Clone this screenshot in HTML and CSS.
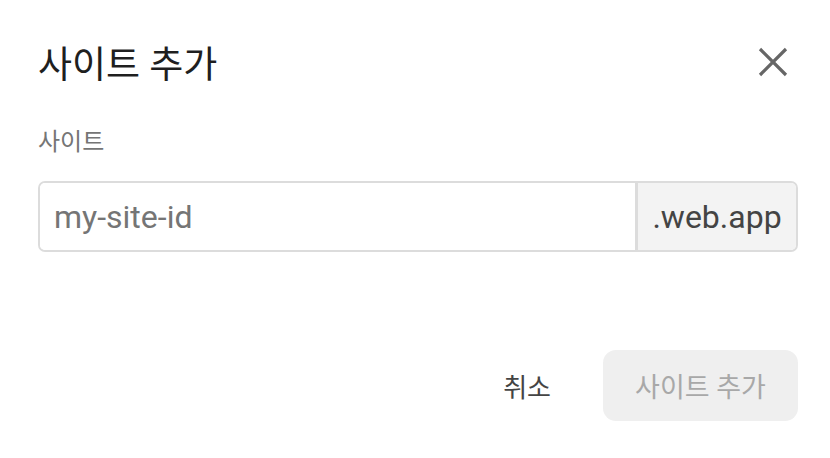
FILE: index.html
```html
<!DOCTYPE html>
<html lang="ko">
<head>
<meta charset="utf-8">
<link rel="stylesheet" href="styles.css">
</head>
<body>
<div class="dialog">
  <div class="header">
    <h1 class="title">사이트 추가</h1>
    <button class="close" aria-label="닫기">
      <svg width="30" height="30" viewBox="0 0 30 30"><path d="M2 2 L28 28 M28 2 L2 28" stroke="#666" stroke-width="3.2" fill="none"/></svg>
    </button>
  </div>
  <label class="label">사이트</label>
  <div class="field">
    <input class="input" placeholder="my-site-id">
    <div class="suffix">.web.app</div>
  </div>
  <div class="actions">
    <button class="btn cancel">취소</button>
    <button class="btn primary" disabled>사이트 추가</button>
  </div>
</div>
</body>
</html>
```
FILE: styles.css
```css
* { box-sizing: border-box; }
html, body { margin: 0; background: #fff; }
body { font-family: Roboto, "Noto Sans CJK KR", sans-serif; }
.dialog { padding: 34px 32px 0 38px; display: flex; flex-direction: column; }
.header { display: flex; justify-content: space-between; align-items: center; height: 56px; }
.title { margin: 0; font-size: 37px; font-weight: 400; color: #1f1f1f; letter-spacing: 0; }
.close { border: 0; background: none; padding: 0; width: 30px; height: 30px; margin-right: 10px; display: flex; }
.label { margin-top: 36px; font-size: 24px; color: #757575; line-height: 32px; }
.field { margin-top: 23px; display: flex; height: 71px; border: 2px solid #dcdcdc; border-radius: 7px; overflow: hidden; }
.input { flex: 1; min-width: 0; border: 0; outline: 0; padding: 0 14px; font-family: inherit; font-size: 32px; color: #212121; }
.input::placeholder { color: #757575; }
.suffix { width: 161px; background: #f3f3f3; border-left: 3px solid #dcdcdc; display: flex; align-items: center; justify-content: center; font-size: 32px; color: #444; }
.actions { margin-top: 98px; display: flex; justify-content: flex-end; align-items: center; gap: 36px; }
.btn { font-family: inherit; font-size: 27px; border: 0; background: none; }
.cancel { color: #444; padding: 0 16px; font-size: 26px; }
.primary { background: #efefef; color: #a8a8a8; border-radius: 13px; width: 195px; height: 71px; }
```
